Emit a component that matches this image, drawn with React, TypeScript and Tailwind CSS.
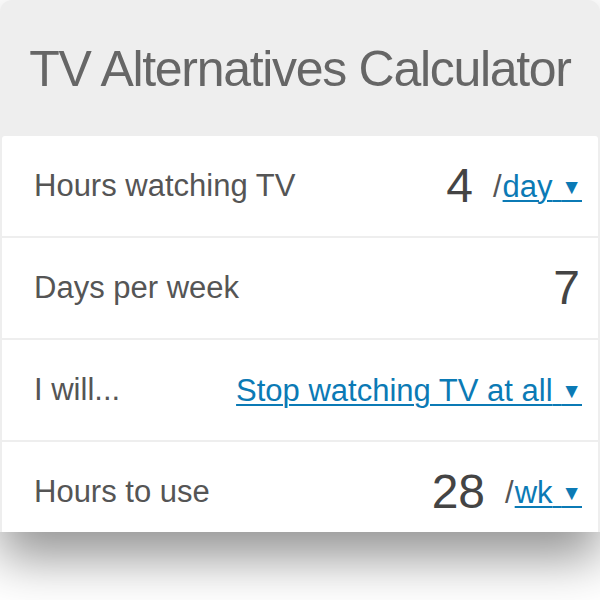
import React from "react";

const font = { fontFamily: '"Liberation Sans", Arial, sans-serif' };

function Unit({ text }: { text: string }) {
  return (
    <span className="flex items-center text-[31px] leading-none">
      <span className="text-[#555] mr-[1px]">/</span>
      <span className="text-[#0b7ab5] underline decoration-[2px] underline-offset-[3px]">
        {text}
        {"\u00a0"}
        <span className="text-[21px] align-[3px]">▼</span>
      </span>
    </span>
  );
}

function Row({ label, children }: { label: string; children?: React.ReactNode }) {
  return (
    <div className="h-[100px] bg-white flex items-center justify-between pl-[32px] pr-[16px] shrink-0">
      <span className="text-[31px] text-[#555] leading-none -mt-[2px]">{label}</span>
      <div className="flex items-center">{children}</div>
    </div>
  );
}

export default function App() {
  return (
    <div className="w-[600px] h-[600px] bg-white overflow-hidden" style={font}>
      <div className="h-[532px] bg-[#eeeeee] rounded-t-[12px] overflow-hidden flex flex-col shadow-[0_26px_50px_0_rgba(0,0,0,0.42)] relative z-10">
        <div className="h-[136px] shrink-0 flex items-center justify-center text-[50px] tracking-[-1.3px] text-[#666] leading-none pt-[2px]">
          TV Alternatives Calculator
        </div>
        <div className="mx-[2px] flex flex-col gap-[2px] rounded-t-[3px] overflow-hidden">
          <Row label="Hours watching TV">
            <span className="text-[48px] text-[#444] leading-none mr-[20px]">4</span>
            <Unit text="day" />
          </Row>
          <Row label="Days per week">
            <span className="text-[48px] text-[#444] leading-none mr-[2px]">7</span>
          </Row>
          <Row label="I will...">
            <span className="text-[31px] leading-none text-[#0b7ab5] underline decoration-[2px] underline-offset-[3px]">
              Stop watching TV at all{"\u00a0"}
              <span className="text-[21px] align-[3px]">▼</span>
            </span>
          </Row>
          <Row label="Hours to use">
            <span className="text-[48px] text-[#444] leading-none mr-[20px]">28</span>
            <Unit text="wk" />
          </Row>
        </div>
      </div>
    </div>
  );
}
